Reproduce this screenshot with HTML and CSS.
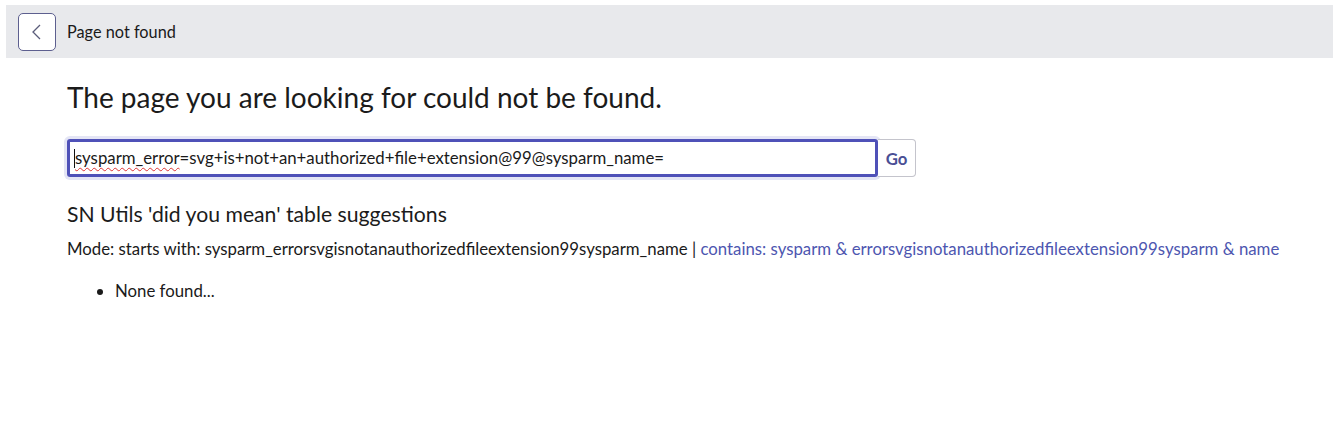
FILE: index.html
```html
<!DOCTYPE html>
<html>
<head>
<meta charset="utf-8">
<link rel="stylesheet" href="styles.css">
</head>
<body>
<div class="page">
  <header class="topbar">
    <button class="back" aria-label="Back">
      <svg width="14" height="18" viewBox="0 0 14 18"><path d="M10 2 L3 9 L10 16" fill="none" stroke="#5a5c7a" stroke-width="1.3"/></svg>
    </button>
    <span class="title">Page not found</span>
  </header>
  <main class="content">
    <h1 class="heading">The page you are looking for could not be found.</h1>
    <form class="search">
      <div class="input"><span class="caret"></span><span class="err">sysparm_error</span>=svg+is+not+an+authorized+file+extension@99@sysparm_name=</div>
      <button type="button" class="go">Go</button>
    </form>
    <h2 class="sub">SN Utils 'did you mean' table suggestions</h2>
    <p class="mode">Mode: starts with: sysparm_errorsvgisnotanauthorizedfileextension99sysparm_name | <a class="link">contains: sysparm &amp; errorsvgisnotanauthorizedfileextension99sysparm &amp; name</a></p>
    <ul class="list"><li>None found...</li></ul>
  </main>
</div>
</body>
</html>
```
FILE: styles.css
```css
html, body { margin: 0; padding: 0; background: #fff; }
body { font-family: Lato, "Open Sans", sans-serif; color: #1a1a1a; }
.page { padding: 5px 0 0 6px; }
.topbar {
  display: flex; align-items: center; gap: 11px;
  background: #e8e9ec; height: 53px; padding: 0 12px; box-sizing: border-box;
}
.back {
  width: 38px; height: 38px; box-sizing: border-box;
  border: 1px solid #5d5f8f; border-radius: 5px; background: #fff;
  display: flex; align-items: center; justify-content: center; padding: 0;
}
.title { font-size: 16.3px; color: #1a1a1a; }
.content { padding-left: 61px; }
.heading { font-size: 28px; font-weight: 400; margin: 23px 0 0; line-height: 32px; color: #1b1b1b; }
.search { display: flex; margin-top: 26px; }
.input {
  width: 811px; height: 38px; box-sizing: border-box;
  border: 3px solid #4f51b8; border-radius: 3px;
  box-shadow: 0 0 0 3px #e4e5f5;
  font-size: 16.8px; line-height: 32px; padding-left: 4px; color: #1a1a1a;
  display: flex; align-items: center; white-space: nowrap;
}
.caret { display: inline-block; width: 1px; height: 19px; background: #111; }
.err { text-decoration: underline wavy #d33; text-decoration-thickness: 1px; text-underline-offset: 3px; }
.go {
  width: 38px; height: 38px; box-sizing: border-box; margin: 0;
  border: 1px solid #c4c4cc; border-left: none; border-radius: 0 4px 4px 0; background: #fff;
  font-family: Lato, sans-serif; font-weight: 700; font-size: 16.8px; color: #4a4f95; padding: 0;
}
.sub { font-size: 21.2px; font-weight: 400; margin: 24px 0 0; line-height: 26px; color: #1b1b1b; }
.mode { font-size: 16.8px; margin: 12px 0 0; line-height: 20px; }
.link { color: #4d56b0; }
.list { margin: 22px 0 0; padding-left: 48px; font-size: 16.8px; line-height: 20px; }
```
